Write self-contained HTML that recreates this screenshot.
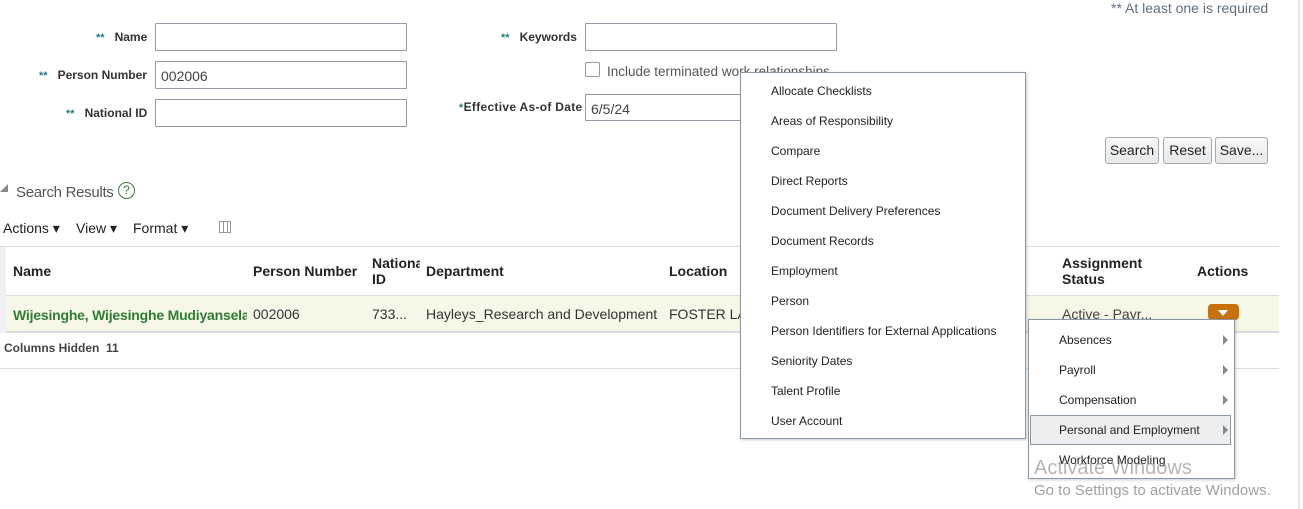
<!DOCTYPE html>
<html><head><meta charset="utf-8"><style>
*{box-sizing:border-box;margin:0;padding:0}
body{width:1303px;height:509px;position:relative;background:#fff;font-family:"Liberation Sans",sans-serif;overflow:hidden;color:#333}
.a{position:absolute;white-space:nowrap}
.lbl{font-size:12px;font-weight:bold;color:#333}
.st{color:#1f7f7a;font-size:11px}
.inp{position:absolute;border:1px solid #8f9aa4;background:#fff;border-radius:1px;font-size:14px;color:#444;padding:6px 5px 0}
.btn{position:absolute;border:1px solid #a0a8b0;border-radius:3px;background:linear-gradient(#f8f8f8,#e6e8ea);font-size:14px;color:#222;text-align:center;line-height:25px}
.th{font-size:14px;font-weight:bold;color:#222}
.mi{position:absolute;left:30px;font-size:12px;color:#222}
.arr{position:absolute;right:6px;width:0;height:0;border-top:5px solid transparent;border-bottom:5px solid transparent;border-left:5px solid #888}
</style></head><body>
<div class="a" style="left:1111px;top:0;font-size:14px;color:#607080">** At least one is required</div>
<div class="a" style="left:1298px;top:0;width:2px;height:509px;background:#e4e6e8"></div>

<div class="a lbl" style="left:96px;top:30px"><span class="st">**</span>&nbsp;&nbsp; Name</div>
<div class="inp" style="left:155px;top:23px;width:252px;height:28px"></div>
<div class="a lbl" style="left:39px;top:68px"><span class="st">**</span>&nbsp;&nbsp; Person Number</div>
<div class="inp" style="left:155px;top:61px;width:252px;height:28px">002006</div>
<div class="a lbl" style="left:66px;top:106px"><span class="st">**</span>&nbsp;&nbsp; National ID</div>
<div class="inp" style="left:155px;top:99px;width:252px;height:28px"></div>

<div class="a lbl" style="left:501px;top:30px"><span class="st">**</span>&nbsp;&nbsp; Keywords</div>
<div class="inp" style="left:585px;top:23px;width:252px;height:28px"></div>
<div class="a" style="left:585px;top:62px;width:15px;height:15px;border:1px solid #8f9aa4;border-radius:2px"></div>
<div class="a" style="left:607px;top:64px;font-size:13.5px;color:#555">Include terminated work relationships</div>
<div class="a lbl" style="left:459px;top:100px;letter-spacing:0.3px"><span class="st">*</span>Effective As-of Date</div>
<div class="inp" style="left:585px;top:94px;width:200px;height:27px">6/5/24</div>

<div class="btn" style="left:1105px;top:137px;width:54px;height:27px">Search</div>
<div class="btn" style="left:1163px;top:137px;width:49px;height:27px">Reset</div>
<div class="btn" style="left:1215px;top:137px;width:53px;height:27px">Save...</div>

<div class="a" style="left:0;top:184px;width:0;height:0;border-left:8px solid transparent;border-bottom:8px solid #888"></div>
<div class="a" style="left:16px;top:184px;font-size:15px;color:#555;letter-spacing:-0.3px">Search Results</div>
<div class="a" style="left:118px;top:182px;width:17px;height:17px;border:1.5px solid #3a7a3a;border-radius:50%;font-size:12px;color:#3a7a3a;text-align:center;line-height:15px">?</div>

<div class="a" style="left:3px;top:220px;font-size:14px;color:#222">Actions ▾</div>
<div class="a" style="left:76px;top:220px;font-size:14px;color:#222">View ▾</div>
<div class="a" style="left:133px;top:220px;font-size:14px;color:#222">Format ▾</div>
<div class="a" style="left:219px;top:221px;width:12px;height:12px;border:1px solid #999;background:repeating-linear-gradient(90deg,#fff 0 3px,#999 3px 4px)"></div>

<div class="a" style="left:0;top:246px;width:1279px;height:1px;background:#d8dde2"></div>
<div class="a" style="left:0;top:295px;width:1279px;height:38px;background:#f7f7e8;border-top:1px solid #d8dde2;border-bottom:2px solid #d8dde2"></div>
<div class="a" style="left:0;top:247px;width:6px;height:86px;background:#eef0f2"></div>
<div class="a th" style="left:13px;top:263px">Name</div>
<div class="a th" style="left:253px;top:263px">Person Number</div>
<div class="a th" style="left:372px;top:255px;width:48px;overflow:hidden;line-height:16px">National<br>ID</div>
<div class="a th" style="left:426px;top:263px">Department</div>
<div class="a th" style="left:669px;top:263px">Location</div>
<div class="a th" style="left:1062px;top:255px;line-height:16px">Assignment<br>Status</div>
<div class="a th" style="left:1197px;top:263px">Actions</div>
<div class="a" style="left:13px;top:307px;width:234px;overflow:hidden;font-size:14px;font-weight:bold;color:#2e7d32;letter-spacing:-0.2px">Wijesinghe, Wijesinghe Mudiyanselage</div>
<div class="a" style="left:253px;top:306px;font-size:14px">002006</div>
<div class="a" style="left:372px;top:306px;font-size:14px">733...</div>
<div class="a" style="left:426px;top:306px;font-size:14px">Hayleys_Research and Development</div>
<div class="a" style="left:669px;top:306px;font-size:14px">FOSTER LANE</div>
<div class="a" style="left:1062px;top:306px;font-size:14px;color:#444">Active - Payr...</div>
<div class="a" style="left:1208px;top:304px;width:31px;height:16px;background:#c8700a;border-radius:4px"></div>
<div class="a" style="left:1218px;top:310px;width:0;height:0;border-left:5px solid transparent;border-right:5px solid transparent;border-top:6px solid #fff"></div>
<div class="a" style="left:4px;top:341px;font-size:12px;font-weight:bold;color:#444">Columns Hidden &nbsp;11</div>
<div class="a" style="left:0;top:368px;width:1279px;height:1px;background:#d8dde2"></div>

<div class="a" style="left:740px;top:72px;width:286px;height:367px;background:#fff;border:1px solid #8a98a6;box-shadow:1px 1px 3px rgba(0,0,0,.2)">
<div class="mi" style="top:11px">Allocate Checklists</div>
<div class="mi" style="top:41px">Areas of Responsibility</div>
<div class="mi" style="top:71px">Compare</div>
<div class="mi" style="top:101px">Direct Reports</div>
<div class="mi" style="top:131px">Document Delivery Preferences</div>
<div class="mi" style="top:161px">Document Records</div>
<div class="mi" style="top:191px">Employment</div>
<div class="mi" style="top:221px">Person</div>
<div class="mi" style="top:251px">Person Identifiers for External Applications</div>
<div class="mi" style="top:281px">Seniority Dates</div>
<div class="mi" style="top:311px">Talent Profile</div>
<div class="mi" style="top:341px">User Account</div>
</div>

<div class="a" style="left:1028px;top:319px;width:207px;height:160px;background:#fff;border:1px solid #8a98a6;box-shadow:1px 1px 3px rgba(0,0,0,.2)">
<div class="mi" style="top:13px">Absences</div><div class="arr" style="top:15px"></div>
<div class="mi" style="top:43px">Payroll</div><div class="arr" style="top:45px"></div>
<div class="mi" style="top:73px">Compensation</div><div class="arr" style="top:75px"></div>
<div class="a" style="left:1px;top:95px;width:201px;height:30px;background:#eceef0;border:1px solid #8a98a6"></div>
<div class="mi" style="top:103px">Personal and Employment</div><div class="arr" style="top:105px"></div>
<div class="mi" style="top:133px">Workforce Modeling</div>
</div>
<div class="a" style="left:1034px;top:457px;font-size:20px;color:rgba(120,120,120,.55)">Activate Windows</div>
<div class="a" style="left:1034px;top:482px;font-size:15px;color:rgba(120,120,120,.7)">Go to Settings to activate Windows.</div>
</body></html>
